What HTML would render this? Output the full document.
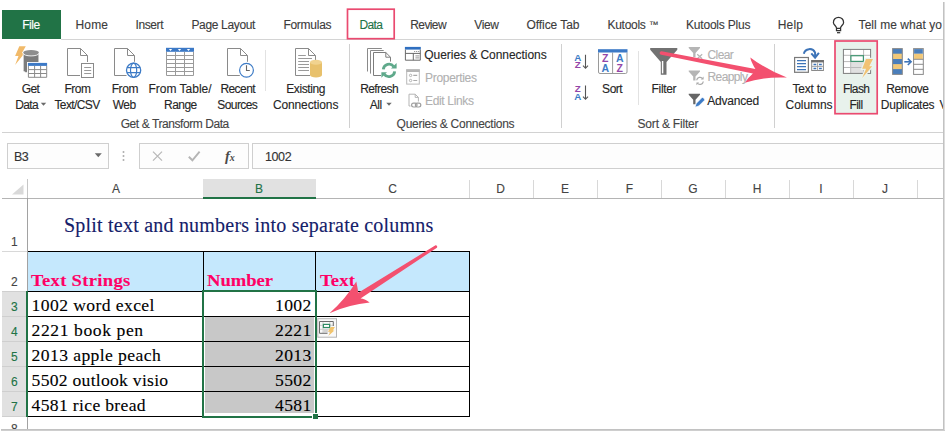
<!DOCTYPE html>
<html><head><meta charset="utf-8"><title>Excel Flash Fill</title>
<style>
html,body{margin:0;padding:0;background:#fff;}
body{width:945px;height:431px;position:relative;overflow:hidden;}
.t{position:absolute;white-space:nowrap;-webkit-text-stroke:0.12px currentColor;}
.b{position:absolute;box-sizing:border-box;}
svg{position:absolute;left:0;top:0;}
</style></head><body>
<!-- ribbon tabs -->
<div class="b" style="left:2px;top:10px;width:59px;height:29px;background:#217346"></div>
<div class="b" style="left:61px;top:39px;width:882px;height:1px;background:#d4d4d4"></div>
<!-- ribbon bottom -->
<div class="b" style="left:2px;top:132px;width:941px;height:1px;background:#d2d2d2"></div>
<!-- group separators -->
<div class="b" style="left:349px;top:44px;width:1px;height:84px;background:#d0d0d0"></div>
<div class="b" style="left:561px;top:44px;width:1px;height:84px;background:#d0d0d0"></div>
<div class="b" style="left:774px;top:44px;width:1px;height:84px;background:#d0d0d0"></div>
<div class="b" style="left:265px;top:50px;width:1px;height:41px;background:#e2e2e2"></div>
<div class="b" style="left:638px;top:51px;width:1px;height:54px;background:#e2e2e2"></div>
<!-- flash fill highlight -->
<!-- formula bar -->
<div class="b" style="left:7px;top:143px;width:102px;height:26px;border:1px solid #cfcfcf;background:#fdfdfd"></div>
<div class="b" style="left:139px;top:143px;width:110px;height:26px;border:1px solid #cfcfcf;background:#fdfdfd"></div>
<div class="b" style="left:252px;top:143px;width:692px;height:26px;border:1px solid #cfcfcf;background:#fdfdfd"></div>
<!-- sheet headers -->
<div class="b" style="left:203px;top:179px;width:113px;height:19px;background:#e1e1e1"></div>
<div class="b" style="left:2px;top:198px;width:941px;height:1px;background:#b4b4b4"></div>
<div class="b" style="left:203px;top:197px;width:113px;height:2px;background:#217346"></div>
<div class="b" style="left:27px;top:179px;width:1px;height:19px;background:#c6c6c6"></div>
<div class="b" style="left:27px;top:198px;width:1px;height:231px;background:#a2a2a2"></div>
<!-- column separators -->
<div class="b" style="left:469px;top:180px;width:1px;height:18px;background:#d8d8d8"></div>
<div class="b" style="left:533px;top:180px;width:1px;height:18px;background:#d8d8d8"></div>
<div class="b" style="left:597px;top:180px;width:1px;height:18px;background:#d8d8d8"></div>
<div class="b" style="left:661px;top:180px;width:1px;height:18px;background:#d8d8d8"></div>
<div class="b" style="left:725px;top:180px;width:1px;height:18px;background:#d8d8d8"></div>
<div class="b" style="left:789px;top:180px;width:1px;height:18px;background:#d8d8d8"></div>
<div class="b" style="left:853px;top:180px;width:1px;height:18px;background:#d8d8d8"></div>
<div class="b" style="left:917px;top:180px;width:1px;height:18px;background:#d8d8d8"></div>
<!-- row headers -->
<div class="b" style="left:2px;top:251px;width:25px;height:1px;background:#d8d8d8"></div>
<div class="b" style="left:2px;top:291px;width:25px;height:125px;background:#e1e1e1"></div>
<div class="b" style="left:2px;top:291px;width:25px;height:1px;background:#cfcfcf"></div>
<div class="b" style="left:2px;top:316px;width:25px;height:1px;background:#cfcfcf"></div>
<div class="b" style="left:2px;top:341px;width:25px;height:1px;background:#cfcfcf"></div>
<div class="b" style="left:2px;top:366px;width:25px;height:1px;background:#cfcfcf"></div>
<div class="b" style="left:2px;top:391px;width:25px;height:1px;background:#cfcfcf"></div>
<div class="b" style="left:2px;top:416px;width:25px;height:1px;background:#cfcfcf"></div>
<div class="b" style="left:26px;top:291px;width:2px;height:126px;background:#217346"></div>
<!-- table -->
<div class="b" style="left:28px;top:252px;width:441px;height:39px;background:#c5e8fd"></div>
<div class="b" style="left:205px;top:317px;width:108.700px;height:96.400px;background:#c8c8c8"></div>
<div class="b" style="left:28px;top:251px;width:442px;height:1px;background:#000"></div>
<div class="b" style="left:28px;top:291px;width:442px;height:1px;background:#000"></div>
<div class="b" style="left:28px;top:316px;width:442px;height:1px;background:#000"></div>
<div class="b" style="left:28px;top:341px;width:442px;height:1px;background:#000"></div>
<div class="b" style="left:28px;top:366px;width:442px;height:1px;background:#000"></div>
<div class="b" style="left:28px;top:391px;width:442px;height:1px;background:#000"></div>
<div class="b" style="left:28px;top:416px;width:442px;height:1px;background:#000"></div>
<div class="b" style="left:203px;top:251px;width:1px;height:166px;background:#000"></div>
<div class="b" style="left:315px;top:251px;width:1px;height:166px;background:#000"></div>
<div class="b" style="left:469px;top:251px;width:1px;height:166px;background:#000"></div>
<!-- selection -->
<div class="b" style="left:202px;top:290px;width:115px;height:128px;border:2px solid #217346"></div>
<div class="b" style="left:312px;top:413px;width:6px;height:6px;background:#217346;border-left:1px solid #fff;border-top:1px solid #fff"></div>
<svg width="945" height="431" viewBox="0 0 945 431" fill="none">
<!-- highlight boxes -->
<rect x="347.500" y="9.200" width="46.700" height="29.500" fill="#fff" stroke="#ea4a70" stroke-width="1.700"/>
<rect x="835" y="41" width="42.200" height="72.700" fill="#e8f2ec" stroke="#ea4a70" stroke-width="1.700"/>
<!-- Get Data -->
<g>
<polygon points="19.300,46.200 25.800,46.200 21.900,52.900 24.700,52.900 15.100,64.900 18.500,56.100 15.100,56.100" fill="#f1ba6a"/>
<path d="M23.200 52.700v17.800a7.850 2.700 0 0 0 15.700 0V52.700z" fill="#7c7c7c" stroke="#fff" stroke-width="0.800"/>
<ellipse cx="31.050" cy="52.600" rx="7.850" ry="2.600" fill="#8e8e8e"/>
<path d="M23.200 53.300a7.850 2.600 0 0 0 15.700 0" stroke="#fff" stroke-width="0.900"/>
<rect x="27" y="62" width="21" height="16.600" fill="#fff"/>
<rect x="27.900" y="62.900" width="19.200" height="3" fill="#3c79c6"/>
<path d="M28.400 65.900V77.300H46.700V65.900M34.600 65.900V77.300M40.600 65.900V77.300M28.400 69.600H46.700M28.400 73.500H46.700" stroke="#8a8a8a" stroke-width="1"/>
</g>
<!-- From Text/CSV -->
<g stroke="#8a8a8a" stroke-width="1">
<path d="M80 75.5H67.5V48.5H80.5L87.5 55.5V62M80.5 48.5V55.5H87.5"/>
<rect x="81.5" y="63.5" width="12" height="14" fill="#fff"/>
<path d="M84.2 67.5H91.2M84.2 70.5H91.2M84.2 73.5H91.2" stroke="#9a9a9a"/>
</g>
<!-- From Web -->
<g>
<path d="M126.5 75.5H114.5V48.5H127.5L134.5 55.5V61.8M127.5 48.5V55.5H134.5" stroke="#8a8a8a"/>
<circle cx="133.6" cy="70.2" r="7.1" fill="#fff" stroke="#3d7bc6" stroke-width="1.3"/>
<ellipse cx="133.6" cy="70.2" rx="3.1" ry="7.1" stroke="#3d7bc6" stroke-width="1.2"/>
<path d="M127 67.7H140.2M127 72.7H140.2" stroke="#3d7bc6" stroke-width="1.2"/>
</g>
<!-- From Table/Range -->
<g>
<rect x="166" y="47.8" width="28" height="4" fill="#3c79c6"/>
<path d="M166.5 51.8V75.5H193.5V51.8M175.5 51.8V75.5M184.5 51.8V75.5M166.5 55.5H193.5M166.5 59.5H193.5M166.5 63.5H193.5M166.5 67.5H193.5M166.5 71.5H193.5" stroke="#9a9a9a"/>
<path d="M168.9 49h3.2l-1.6 1.9zM177.9 49h3.2l-1.6 1.9zM186.9 49h3.2l-1.6 1.9z" fill="#fff"/>
</g>
<!-- Recent Sources -->
<g>
<path d="M239.8 75.5H227.5V48.5H240.5L247.5 55.5V61.8M240.5 48.5V55.5H247.5" stroke="#8a8a8a"/>
<circle cx="246.5" cy="70.2" r="6.9" fill="#fff" stroke="#3d7bc6" stroke-width="1.2"/>
<path d="M246.5 65.2V70.5H249.8" stroke="#666" stroke-width="1.1"/>
</g>
<!-- Existing Connections -->
<g>
<path d="M310 75.5H295.5V48.5H308.5L315.5 55.5V60M308.5 48.5V55.5H315.5" stroke="#8a8a8a"/>
<path d="M298.2 55.5H305.8M298.2 58.5H312M298.2 61.5H309M298.2 64.5H309M298.2 67.5H309M298.2 70.5H309" stroke="#9a9a9a"/>
<path d="M310 62.2v12.8a6 2.5 0 0 0 12 0V62.2z" fill="#e8c16c"/>
<ellipse cx="316" cy="62.2" rx="6" ry="2.5" fill="#f1d38f"/>
</g>
<!-- Refresh All -->
<g>
<path d="M381.800 48.500H367.500V71.500M383.700 50.500H370.500V73.600" stroke="#8a8a8a"/>
<path d="M381 75.500H373.500V52.500H385.800L390.500 57.200V61.600M385.800 52.500V57.200H390.500" stroke="#7d7d7d"/>
<path d="M383.300 69.400a5.800 5.800 0 0 1 10.400-2.900" stroke="#5fa98b" stroke-width="2.800"/>
<path d="M394.700 71.400a5.800 5.800 0 0 1-10.400 2.900" stroke="#5fa98b" stroke-width="2.800"/>
<path d="M396.600 63v5.600h-5.600z" fill="#5fa98b"/>
<path d="M381.400 77.800v-5.600h5.600z" fill="#5fa98b"/>
</g>
<!-- Queries & Connections small -->
<g>
<rect x="404.900" y="46.900" width="15.900" height="2.700" fill="#2f6fc0"/>
<path d="M405.400 49.600V60.200H420.300V49.600M413.300 53.400V60.200M405.400 53.400H420.300" stroke="#6a6a6a"/>
<path d="M415.400 55.900H419.400M415.400 57.900H419.400" stroke="#8a8a8a" stroke-width="0.900"/>
<path d="M414.200 51.500h1M416.200 51.500h1M418.200 51.500h1" stroke="#777" stroke-width="0.900"/>
</g>
<!-- Properties small -->
<g>
<rect x="406.200" y="69.300" width="13.600" height="2.700" fill="#b5b5b5"/>
<rect x="406.700" y="69.800" width="12.600" height="14.300" stroke="#b9b9b9"/>
<circle cx="410.600" cy="75.400" r="1.200" stroke="#aaa" stroke-width="0.900"/>
<circle cx="410.600" cy="80.500" r="1.200" stroke="#aaa" stroke-width="0.900"/>
<path d="M413.300 75.400H417.200M413.300 80.500H417.200" stroke="#aaa" stroke-width="1.100"/>
</g>
<!-- Edit Links small -->
<g stroke="#b5b5b5">
<path d="M410.500 106H409V94.200H415.200L418.400 97.400V101.500M415.200 94.200V97.400H418.400"/>
<rect x="411.600" y="103.200" width="5.400" height="3.800" rx="1.900" stroke="#9f9f9f" stroke-width="1.200"/>
<rect x="415.400" y="103.200" width="5.400" height="3.800" rx="1.900" stroke="#9f9f9f" stroke-width="1.200"/>
</g>
<!-- dropdown arrows -->
<path d="M40.8 102.8h5.4l-2.7 3z" fill="#6a6a6a"/>
<path d="M386.3 102.8h5.4l-2.7 3z" fill="#6a6a6a"/>
<!-- Sort small -->
<g>
<path d="M585.5 54.7V68.200M583 65.600l2.500 2.700 2.500-2.700" stroke="#555" stroke-width="1.1"/>
<path d="M585.5 85.5V99.200M583 96.600l2.500 2.700 2.500-2.700" stroke="#555" stroke-width="1.1"/>
</g>
<!-- Sort big -->
<g>
<path d="M598.5 52.5V72a1.5 1.5 0 0 0 1.5 1.5H625.5a1.5 1.5 0 0 0 1.5-1.5V52.5M612.6 52.5V73.5" stroke="#9a9a9a"/>
<rect x="598" y="49.2" width="29.5" height="3.3" fill="#3c79c6"/>
</g>
<!-- Filter big -->
<g>
<path d="M650.2 48H677.3V49.8L666.5 62V74.8H660.8V62L650.2 49.8z" fill="#727272"/>
<path d="M662.6 61V73.4" stroke="#fff" stroke-width="1.4"/>
</g>
<!-- Clear / Reapply / Advanced -->
<g>
<path d="M688.7 47H700V48L695.5 53V57H693.2V53L688.7 48z" fill="#b5b5b5"/>
<path d="M697.2 54.2l5 4.6M702.2 54.2l-5 4.6" stroke="#b5b5b5" stroke-width="1.2"/>
<path d="M688.7 70.4H700V71.4L695.5 76.4V80.5H693.2V76.4L688.7 71.4z" fill="#b5b5b5"/>
<path d="M696.700 80.300a3.300 3.300 0 0 1 6-1.500M703.300 81.500a3.300 3.300 0 0 1-6 1.500" stroke="#ababab" stroke-width="1.300"/>
<path d="M703.600 76.600v2.800h-2.800zM696.400 85.200v-2.800h2.800z" fill="#ababab"/>
<path d="M688.7 93.8H700V94.8L695.5 99.8V104.3H693.2V99.8L688.7 94.8z" fill="#666"/>
<path d="M695 107.200l1.200-3.800 5.600-5.600a1 1 0 0 1 1.400 0l1.200 1.200a1 1 0 0 1 0 1.400l-5.600 5.600z" fill="#3d7bc6" stroke="#fff" stroke-width="0.700"/>
</g>
<!-- Text to Columns -->
<g>
<rect x="794.600" y="57.500" width="13.800" height="14.800" fill="#fff" stroke="#7a7a7a" stroke-width="1.200"/>
<path d="M797 60.600H806M797 63.600H806M797 66.600H806M797 69.600H806" stroke="#3d74b8" stroke-width="1.200"/>
<rect x="811.700" y="60.500" width="11.700" height="10" fill="#fff" stroke="#8a8a8a"/>
<rect x="811.200" y="60" width="12.700" height="2.400" fill="#6f6f6f"/>
<path d="M817.600 62.400V70.500M811.700 66.400H823.400" stroke="#9a9a9a" stroke-width="0.900"/>
<path d="M813.500 64.500h2.800M819 64.500h2.800M813.500 68.500h2.800M819 68.500h2.800" stroke="#3d74b8" stroke-width="1.300"/>
<path d="M803.800 53.800a6 6 0 0 1 11.300-1.200V56.500" stroke="#3d74b8" stroke-width="2"/>
<path d="M811.300 53.300l3.800 4.400 3.800-4.800" stroke="#3d74b8" stroke-width="2"/>
</g>
<!-- Flash Fill -->
<g>
<rect x="843.400" y="49.400" width="27.200" height="24" fill="#fff"/>
<rect x="851" y="62" width="12.500" height="11.400" fill="#e0e0e0"/>
<path d="M850.700 49.400V73.400M863.600 49.400V73.400M843.400 55.300H870.600M843.400 61.600H870.600M843.400 67.500H870.600" stroke="#b9b9b9"/>
<rect x="843.400" y="49.400" width="27.200" height="24" stroke="#7d7d7d"/>
<rect x="850.900" y="55.700" width="12.500" height="5.700" fill="#fff" stroke="#3f9470" stroke-width="1.200"/>
<polygon points="866,59 873,59 869.300,66.300 872.200,66.300 862.200,78 866.100,68.800 862.200,68.800" fill="#ebf4ef" stroke="#ebf4ef" stroke-width="2.400"/>
<polygon points="866,59 873,59 869.300,66.300 872.200,66.300 862.200,78 866.100,68.800 862.200,68.800" fill="#f1c274"/>
</g>
<!-- Remove Duplicates -->
<g>
<rect x="892.600" y="48.600" width="9.700" height="25.800" fill="#4a7ebb" stroke="#8a8a8a"/>
<rect x="893.100" y="53.700" width="8.700" height="5.300" fill="#f2c878"/>
<rect x="893.100" y="64.100" width="8.700" height="5" fill="#f2c878"/>
<rect x="913.600" y="48.600" width="9.700" height="25.800" fill="#fff" stroke="#8a8a8a"/>
<rect x="914.100" y="49.100" width="8.700" height="4.700" fill="#4a7ebb"/>
<rect x="914.100" y="53.800" width="8.700" height="5.200" fill="#f2c878"/>
<path d="M913.600 59.300H923.300M913.600 64.300H923.300M913.600 69.300H923.300" stroke="#8a8a8a"/>
<path d="M904.300 61.800H910.300" stroke="#3d74b8" stroke-width="1.600"/>
<path d="M907.800 58.600l3.300 3.200-3.300 3.200" stroke="#3d74b8" stroke-width="1.600"/>
</g>
<!-- bulb -->
<g stroke="#333" stroke-width="1.250">
<path d="M836.500 28.100c0-2-3.100-3.300-3.100-5.700a5.100 5.100 0 0 1 10.200 0c0 2.400-3.100 3.700-3.100 5.700"/>
<path d="M836.500 28.300h4.100v2.300h-4.100z"/>
<path d="M837 32.700h3.200"/>
</g>
<!-- formula bar icons -->
<path d="M94.8 153.2h7l-3.500 4z" fill="#6a6a6a"/>
<path d="M123.500 151.300v1.500M123.500 155.300v1.500M123.500 159.300v1.500" stroke="#9a9a9a" stroke-width="1.600"/>
<path d="M153 151.600l9 9M162 151.600l-9 9" stroke="#b9b9b9" stroke-width="1.300"/>
<path d="M188.800 156.800l3.600 3.500 7.200-8.600" stroke="#b5b5b5" stroke-width="1.900"/>
<!-- corner triangle -->
<path d="M23.500 184.500v10h-11.500z" fill="#d9d9d9"/>
<!-- sort letters -->
<g font-family="'Liberation Sans', sans-serif" font-weight="bold" text-anchor="middle">
<text x="577.8" y="61" font-size="9.8" fill="#3d7bc6">A</text>
<text x="577.8" y="68.200" font-size="9.8" fill="#9346a8">Z</text>
<text x="577.8" y="91.800" font-size="9.8" fill="#9346a8">Z</text>
<text x="577.8" y="99.700" font-size="9.8" fill="#3d7bc6">A</text>
<text x="605.200" y="62" font-size="10.5" fill="#9346a8">Z</text>
<text x="605.200" y="71.800" font-size="10.5" fill="#3d7bc6">A</text>
<text x="619.800" y="62" font-size="10.5" fill="#3d7bc6">A</text>
<text x="619.800" y="71.800" font-size="10.5" fill="#9346a8">Z</text>
</g>
<text x="225" y="160.500" font-family="'Liberation Serif', serif" font-style="italic" font-weight="bold" font-size="14.500" fill="#4a4a4a">f</text>
<text x="229.800" y="160.800" font-family="'Liberation Serif', serif" font-style="italic" font-weight="bold" font-size="10" fill="#4a4a4a">x</text>
<!-- flash fill options button -->
<g>
<rect x="317.800" y="318.700" width="18.700" height="18.500" fill="#f9f9f9" stroke="#b4b4b4"/>
<rect x="323.400" y="329.600" width="4.400" height="3" fill="#d2d2d2"/>
<path d="M323 321.500V333.300M329.800 321.500V333.300M319.500 325.300H333.300M319.500 329.300H333.300" stroke="#c9c9c9" stroke-width="0.900"/>
<path d="M327.500 333.300H319.500V321.500H333.300V326" stroke="#6c6c6c" stroke-width="1"/>
<rect x="323.400" y="324.400" width="6.200" height="3.100" fill="#fff" stroke="#2e8b63" stroke-width="1.200"/>
<polygon points="330.800,327 334.900,327 332.800,330.600 334.400,330.600 328.300,335.900 330.300,331.700 327.900,331.700" fill="#f2c46c"/>
</g>
</svg>

<span class="t" style="left:22.20px;top:17.04px;font:normal normal 12px/16px 'Liberation Sans', sans-serif;color:#fff;letter-spacing:-0.45px;">File</span>
<span class="t" style="left:75.50px;top:17.04px;font:normal normal 12px/16px 'Liberation Sans', sans-serif;color:#3c3c3c;letter-spacing:0.16px;">Home</span>
<span class="t" style="left:135.59px;top:17.04px;font:normal normal 12px/16px 'Liberation Sans', sans-serif;color:#3c3c3c;letter-spacing:-0.42px;">Insert</span>
<span class="t" style="left:191.40px;top:17.04px;font:normal normal 12px/16px 'Liberation Sans', sans-serif;color:#3c3c3c;letter-spacing:-0.34px;">Page Layout</span>
<span class="t" style="left:283.40px;top:17.04px;font:normal normal 12px/16px 'Liberation Sans', sans-serif;color:#3c3c3c;letter-spacing:-0.26px;">Formulas</span>
<span class="t" style="left:359.41px;top:17.04px;font:normal normal 12px/16px 'Liberation Sans', sans-serif;color:#217346;letter-spacing:-0.59px;">Data</span>
<span class="t" style="left:410.27px;top:17.04px;font:normal normal 12px/16px 'Liberation Sans', sans-serif;color:#3c3c3c;letter-spacing:-0.60px;">Review</span>
<span class="t" style="left:474.20px;top:17.04px;font:normal normal 12px/16px 'Liberation Sans', sans-serif;color:#3c3c3c;letter-spacing:-0.33px;">View</span>
<span class="t" style="left:526.52px;top:17.04px;font:normal normal 12px/16px 'Liberation Sans', sans-serif;color:#3c3c3c;letter-spacing:-0.07px;">Office Tab</span>
<span class="t" style="left:607.50px;top:17.04px;font:normal normal 12px/16px 'Liberation Sans', sans-serif;color:#3c3c3c;letter-spacing:-0.29px;">Kutools</span>
<span class="t" style="left:649.05px;top:18.71px;font:normal normal 9.5px/12px 'Liberation Sans', sans-serif;color:#3c3c3c;">™</span>
<span class="t" style="left:686.00px;top:17.04px;font:normal normal 12px/16px 'Liberation Sans', sans-serif;color:#3c3c3c;letter-spacing:-0.20px;">Kutools Plus</span>
<span class="t" style="left:777.71px;top:17.04px;font:normal normal 12px/16px 'Liberation Sans', sans-serif;color:#3c3c3c;letter-spacing:0.20px;">Help</span>
<span class="t" style="left:858.60px;top:17.04px;font:normal normal 12px/16px 'Liberation Sans', sans-serif;color:#3c3c3c;letter-spacing:0.05px;">Tell me what yo</span>
<span class="t" style="left:21.78px;top:80.84px;font:normal normal 12px/16px 'Liberation Sans', sans-serif;color:#262626;letter-spacing:-0.60px;">Get</span>
<span class="t" style="left:15.17px;top:96.54px;font:normal normal 12px/16px 'Liberation Sans', sans-serif;color:#262626;letter-spacing:-0.60px;">Data</span>
<span class="t" style="left:64.41px;top:80.84px;font:normal normal 12px/16px 'Liberation Sans', sans-serif;color:#262626;letter-spacing:-0.47px;">From</span>
<span class="t" style="left:54.41px;top:96.54px;font:normal normal 12px/16px 'Liberation Sans', sans-serif;color:#262626;letter-spacing:-0.59px;">Text/CSV</span>
<span class="t" style="left:111.70px;top:80.84px;font:normal normal 12px/16px 'Liberation Sans', sans-serif;color:#262626;letter-spacing:-0.43px;">From</span>
<span class="t" style="left:112.87px;top:96.54px;font:normal normal 12px/16px 'Liberation Sans', sans-serif;color:#262626;letter-spacing:-0.60px;">Web</span>
<span class="t" style="left:148.38px;top:80.84px;font:normal normal 12px/16px 'Liberation Sans', sans-serif;color:#262626;letter-spacing:0.01px;">From Table/</span>
<span class="t" style="left:164.00px;top:96.54px;font:normal normal 12px/16px 'Liberation Sans', sans-serif;color:#262626;letter-spacing:-0.52px;">Range</span>
<span class="t" style="left:220.41px;top:80.84px;font:normal normal 12px/16px 'Liberation Sans', sans-serif;color:#262626;letter-spacing:-0.57px;">Recent</span>
<span class="t" style="left:217.30px;top:96.54px;font:normal normal 12px/16px 'Liberation Sans', sans-serif;color:#262626;letter-spacing:-0.59px;">Sources</span>
<span class="t" style="left:286.20px;top:80.84px;font:normal normal 12px/16px 'Liberation Sans', sans-serif;color:#262626;letter-spacing:-0.39px;">Existing</span>
<span class="t" style="left:272.89px;top:96.54px;font:normal normal 12px/16px 'Liberation Sans', sans-serif;color:#262626;letter-spacing:-0.12px;">Connections</span>
<span class="t" style="left:360.23px;top:80.84px;font:normal normal 12px/16px 'Liberation Sans', sans-serif;color:#262626;letter-spacing:-0.60px;">Refresh</span>
<span class="t" style="left:369.70px;top:96.54px;font:normal normal 12px/16px 'Liberation Sans', sans-serif;color:#262626;letter-spacing:-0.42px;">All</span>
<span class="t" style="left:602.10px;top:80.84px;font:normal normal 12px/16px 'Liberation Sans', sans-serif;color:#262626;letter-spacing:-0.47px;">Sort</span>
<span class="t" style="left:651.59px;top:80.84px;font:normal normal 12px/16px 'Liberation Sans', sans-serif;color:#262626;letter-spacing:-0.33px;">Filter</span>
<span class="t" style="left:792.60px;top:80.84px;font:normal normal 12px/16px 'Liberation Sans', sans-serif;color:#262626;letter-spacing:-0.26px;">Text to</span>
<span class="t" style="left:785.61px;top:96.54px;font:normal normal 12px/16px 'Liberation Sans', sans-serif;color:#262626;letter-spacing:-0.08px;">Columns</span>
<span class="t" style="left:843.03px;top:80.84px;font:normal normal 12px/16px 'Liberation Sans', sans-serif;color:#262626;letter-spacing:-0.60px;">Flash</span>
<span class="t" style="left:849.54px;top:96.54px;font:normal normal 12px/16px 'Liberation Sans', sans-serif;color:#262626;letter-spacing:-0.60px;">Fill</span>
<span class="t" style="left:886.31px;top:80.84px;font:normal normal 12px/16px 'Liberation Sans', sans-serif;color:#262626;letter-spacing:-0.40px;">Remove</span>
<span class="t" style="left:880.81px;top:96.54px;font:normal normal 12px/16px 'Liberation Sans', sans-serif;color:#262626;letter-spacing:-0.25px;">Duplicates</span>
<span class="t" style="left:939.60px;top:96.54px;font:normal normal 12px/16px 'Liberation Sans', sans-serif;color:#262626;">V</span>
<span class="t" style="left:424.30px;top:46.94px;font:normal normal 12px/16px 'Liberation Sans', sans-serif;color:#262626;letter-spacing:-0.05px;">Queries &amp; Connections</span>
<span class="t" style="left:425.00px;top:69.74px;font:normal normal 12px/16px 'Liberation Sans', sans-serif;color:#b1b1b1;letter-spacing:-0.30px;">Properties</span>
<span class="t" style="left:425.00px;top:92.54px;font:normal normal 12px/16px 'Liberation Sans', sans-serif;color:#b1b1b1;letter-spacing:-0.34px;">Edit Links</span>
<span class="t" style="left:707.50px;top:46.84px;font:normal normal 12px/16px 'Liberation Sans', sans-serif;color:#b1b1b1;letter-spacing:-0.60px;">Clear</span>
<span class="t" style="left:707.50px;top:69.44px;font:normal normal 12px/16px 'Liberation Sans', sans-serif;color:#b1b1b1;letter-spacing:-0.60px;">Reapply</span>
<span class="t" style="left:707.20px;top:92.84px;font:normal normal 12px/16px 'Liberation Sans', sans-serif;color:#262626;letter-spacing:-0.20px;">Advanced</span>
<span class="t" style="left:120.73px;top:116.44px;font:normal normal 12px/16px 'Liberation Sans', sans-serif;color:#444;letter-spacing:-0.43px;">Get &amp; Transform Data</span>
<span class="t" style="left:396.60px;top:116.44px;font:normal normal 12px/16px 'Liberation Sans', sans-serif;color:#444;letter-spacing:-0.27px;">Queries &amp; Connections</span>
<span class="t" style="left:637.57px;top:116.44px;font:normal normal 12px/16px 'Liberation Sans', sans-serif;color:#444;letter-spacing:-0.20px;">Sort &amp; Filter</span>
<span class="t" style="left:14.00px;top:148.87px;font:normal normal 12.5px/16px 'Liberation Sans', sans-serif;color:#333;letter-spacing:-0.60px;">B3</span>
<span class="t" style="left:264.90px;top:148.87px;font:normal normal 12.5px/16px 'Liberation Sans', sans-serif;color:#333;letter-spacing:-0.37px;">1002</span>
<span class="t" style="left:111.99px;top:180.54px;font:normal normal 12px/16px 'Liberation Sans', sans-serif;color:#444;">A</span>
<span class="t" style="left:388.16px;top:180.54px;font:normal normal 12px/16px 'Liberation Sans', sans-serif;color:#444;">C</span>
<span class="t" style="left:496.16px;top:180.54px;font:normal normal 12px/16px 'Liberation Sans', sans-serif;color:#444;">D</span>
<span class="t" style="left:560.99px;top:180.54px;font:normal normal 12px/16px 'Liberation Sans', sans-serif;color:#444;">E</span>
<span class="t" style="left:625.83px;top:180.54px;font:normal normal 12px/16px 'Liberation Sans', sans-serif;color:#444;">F</span>
<span class="t" style="left:688.33px;top:180.54px;font:normal normal 12px/16px 'Liberation Sans', sans-serif;color:#444;">G</span>
<span class="t" style="left:752.66px;top:180.54px;font:normal normal 12px/16px 'Liberation Sans', sans-serif;color:#444;">H</span>
<span class="t" style="left:819.33px;top:180.54px;font:normal normal 12px/16px 'Liberation Sans', sans-serif;color:#444;">I</span>
<span class="t" style="left:882.00px;top:180.54px;font:normal normal 12px/16px 'Liberation Sans', sans-serif;color:#444;">J</span>
<span class="t" style="left:254.99px;top:180.54px;font:normal normal 12px/16px 'Liberation Sans', sans-serif;color:#217346;">B</span>
<span class="t" style="left:10.91px;top:233.84px;font:normal normal 12px/16px 'Liberation Sans', sans-serif;color:#444;">1</span>
<span class="t" style="left:10.91px;top:273.84px;font:normal normal 12px/16px 'Liberation Sans', sans-serif;color:#444;">2</span>
<span class="t" style="left:10.91px;top:298.84px;font:normal normal 12px/16px 'Liberation Sans', sans-serif;color:#217346;">3</span>
<span class="t" style="left:10.91px;top:323.84px;font:normal normal 12px/16px 'Liberation Sans', sans-serif;color:#217346;">4</span>
<span class="t" style="left:10.91px;top:348.84px;font:normal normal 12px/16px 'Liberation Sans', sans-serif;color:#217346;">5</span>
<span class="t" style="left:10.91px;top:373.84px;font:normal normal 12px/16px 'Liberation Sans', sans-serif;color:#217346;">6</span>
<span class="t" style="left:10.91px;top:398.84px;font:normal normal 12px/16px 'Liberation Sans', sans-serif;color:#217346;">7</span>
<span class="t" style="left:10.91px;top:420.84px;font:normal normal 12px/16px 'Liberation Sans', sans-serif;color:#444;">8</span>
<span class="t" style="left:63.95px;top:212.25px;font:normal normal 20px/26px 'Liberation Serif', serif;color:#14206a;letter-spacing:0.22px;transform:scale(1.0,1.066);transform-origin:0 19.75px;">Split text and numbers into separate columns</span>
<span class="t" style="left:31.10px;top:268.63px;font:normal bold 17.4px/23px 'Liberation Serif', serif;color:#ff0066;letter-spacing:0.28px;transform:scale(1.07,1.0);transform-origin:0 17.37px;">Text Strings</span>
<span class="t" style="left:206.80px;top:268.63px;font:normal bold 17.4px/23px 'Liberation Serif', serif;color:#ff0066;letter-spacing:-0.03px;transform:scale(1.07,1.0);transform-origin:0 17.37px;">Number</span>
<span class="t" style="left:319.90px;top:268.63px;font:normal bold 17.4px/23px 'Liberation Serif', serif;color:#ff0066;letter-spacing:0.16px;transform:scale(1.07,1.0);transform-origin:0 17.37px;">Text</span>
<span class="t" style="left:31.60px;top:293.86px;font:normal normal 17.6px/23px 'Liberation Serif', serif;color:#000;letter-spacing:0.40px;">1002 word excel</span>
<span class="t" style="left:275.11px;top:293.86px;font:normal normal 17.6px/23px 'Liberation Serif', serif;color:#000;letter-spacing:0.30px;">1002</span>
<span class="t" style="left:31.60px;top:318.86px;font:normal normal 17.6px/23px 'Liberation Serif', serif;color:#000;letter-spacing:0.58px;">2221 book pen</span>
<span class="t" style="left:275.11px;top:318.86px;font:normal normal 17.6px/23px 'Liberation Serif', serif;color:#000;letter-spacing:0.30px;">2221</span>
<span class="t" style="left:31.60px;top:343.86px;font:normal normal 17.6px/23px 'Liberation Serif', serif;color:#000;letter-spacing:0.40px;">2013 apple peach</span>
<span class="t" style="left:275.11px;top:343.86px;font:normal normal 17.6px/23px 'Liberation Serif', serif;color:#000;letter-spacing:0.30px;">2013</span>
<span class="t" style="left:31.60px;top:368.86px;font:normal normal 17.6px/23px 'Liberation Serif', serif;color:#000;letter-spacing:0.27px;">5502 outlook visio</span>
<span class="t" style="left:275.11px;top:368.86px;font:normal normal 17.6px/23px 'Liberation Serif', serif;color:#000;letter-spacing:0.30px;">5502</span>
<span class="t" style="left:31.60px;top:393.86px;font:normal normal 17.6px/23px 'Liberation Serif', serif;color:#000;letter-spacing:0.33px;">4581 rice bread</span>
<span class="t" style="left:275.11px;top:393.86px;font:normal normal 17.6px/23px 'Liberation Serif', serif;color:#000;letter-spacing:0.30px;">4581</span>
<svg width="945" height="431" viewBox="0 0 945 431">
<path d="M661.600 51.300L755.400 69Q750.950 61.550 750.300 57.400Q766.900 69.900 786.900 77.600Q765.150 76.500 744.800 82.800Q747.450 78.150 752.900 73.400L661.200 54.700A1.700 1.700 0 0 1 661.600 51.300Z" fill="#f3506f"/>
<path d="M435.500 245.300L358.300 292.800Q357.600 288 356.300 281.600Q345.500 299.300 329.500 313.200Q348.900 304.700 369.700 302.600Q364.200 298.300 360.500 298.400L436.900 247.700A1.500 1.500 0 0 0 435.500 245.300Z" fill="#f3506f"/>
</svg>

<!-- frame -->
<div class="b" style="left:943px;top:2px;width:1px;height:429px;background:#c2c2c2;z-index:5"></div>
<div class="b" style="left:944px;top:2px;width:1px;height:429px;background:#dcdcdc;z-index:5"></div>
<div class="b" style="left:1px;top:429px;width:943px;height:1px;background:#c2c2c2;z-index:5"></div>
<div class="b" style="left:1px;top:430px;width:944px;height:1px;background:#cecece;z-index:5"></div>

</body></html>
